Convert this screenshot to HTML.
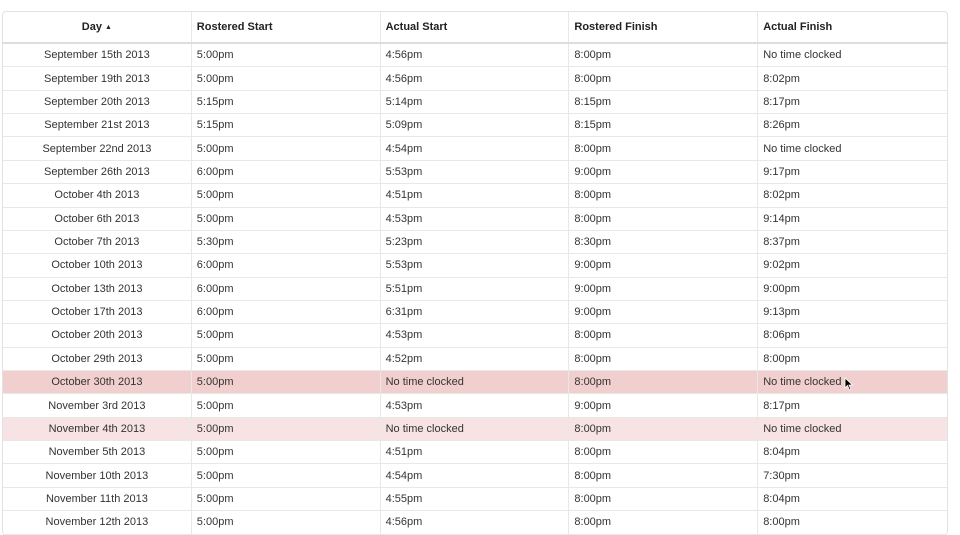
<!DOCTYPE html>
<html><head><style>
body{margin:0;background:#fff;width:960px;height:520px;overflow:hidden;font-family:"Liberation Sans",sans-serif;font-size:11px;color:#333}
.t{position:absolute;left:2px;top:11px;width:944px;border:1px solid #e2e2e2;border-radius:4px;border-bottom:none}
.r{display:flex;height:23.37px;border-bottom:1px solid #e8e8e8;box-sizing:border-box;align-items:center}
.h{height:32px;font-weight:bold;border-bottom:2px solid #ddd;font-size:11px;color:#222}
.c{width:189px;box-sizing:border-box;padding-left:5px;border-right:1px solid #e8e8e8;height:100%;display:flex;align-items:center}
.c:first-child{justify-content:center;padding:0}
.c:last-child{border-right:none}
.a{background:#f2cfcf}.b{background:#f7e3e3}
</style></head><body>
<div class="t">
<div class="r h"><div class="c">Day&nbsp;<span style="font-size:7px">▲</span></div><div class="c">Rostered Start</div><div class="c">Actual Start</div><div class="c">Rostered Finish</div><div class="c">Actual Finish</div></div>
<div class="r"><div class="c">September 15th 2013</div><div class="c">5:00pm</div><div class="c">4:56pm</div><div class="c">8:00pm</div><div class="c">No time clocked</div></div>
<div class="r"><div class="c">September 19th 2013</div><div class="c">5:00pm</div><div class="c">4:56pm</div><div class="c">8:00pm</div><div class="c">8:02pm</div></div>
<div class="r"><div class="c">September 20th 2013</div><div class="c">5:15pm</div><div class="c">5:14pm</div><div class="c">8:15pm</div><div class="c">8:17pm</div></div>
<div class="r"><div class="c">September 21st 2013</div><div class="c">5:15pm</div><div class="c">5:09pm</div><div class="c">8:15pm</div><div class="c">8:26pm</div></div>
<div class="r"><div class="c">September 22nd 2013</div><div class="c">5:00pm</div><div class="c">4:54pm</div><div class="c">8:00pm</div><div class="c">No time clocked</div></div>
<div class="r"><div class="c">September 26th 2013</div><div class="c">6:00pm</div><div class="c">5:53pm</div><div class="c">9:00pm</div><div class="c">9:17pm</div></div>
<div class="r"><div class="c">October 4th 2013</div><div class="c">5:00pm</div><div class="c">4:51pm</div><div class="c">8:00pm</div><div class="c">8:02pm</div></div>
<div class="r"><div class="c">October 6th 2013</div><div class="c">5:00pm</div><div class="c">4:53pm</div><div class="c">8:00pm</div><div class="c">9:14pm</div></div>
<div class="r"><div class="c">October 7th 2013</div><div class="c">5:30pm</div><div class="c">5:23pm</div><div class="c">8:30pm</div><div class="c">8:37pm</div></div>
<div class="r"><div class="c">October 10th 2013</div><div class="c">6:00pm</div><div class="c">5:53pm</div><div class="c">9:00pm</div><div class="c">9:02pm</div></div>
<div class="r"><div class="c">October 13th 2013</div><div class="c">6:00pm</div><div class="c">5:51pm</div><div class="c">9:00pm</div><div class="c">9:00pm</div></div>
<div class="r"><div class="c">October 17th 2013</div><div class="c">6:00pm</div><div class="c">6:31pm</div><div class="c">9:00pm</div><div class="c">9:13pm</div></div>
<div class="r"><div class="c">October 20th 2013</div><div class="c">5:00pm</div><div class="c">4:53pm</div><div class="c">8:00pm</div><div class="c">8:06pm</div></div>
<div class="r"><div class="c">October 29th 2013</div><div class="c">5:00pm</div><div class="c">4:52pm</div><div class="c">8:00pm</div><div class="c">8:00pm</div></div>
<div class="r a"><div class="c">October 30th 2013</div><div class="c">5:00pm</div><div class="c">No time clocked</div><div class="c">8:00pm</div><div class="c">No time clocked <svg width="10" height="14" viewBox="0 0 10 14" style="margin-left:3px;margin-top:4px"><path d="M1 1 L1 11 L3.5 8.5 L5.5 13 L7 12.3 L5 8 L8.5 8 Z" fill="#000" stroke="#fff" stroke-width="0.8"/></svg></div></div>
<div class="r"><div class="c">November 3rd 2013</div><div class="c">5:00pm</div><div class="c">4:53pm</div><div class="c">9:00pm</div><div class="c">8:17pm</div></div>
<div class="r b"><div class="c">November 4th 2013</div><div class="c">5:00pm</div><div class="c">No time clocked</div><div class="c">8:00pm</div><div class="c">No time clocked</div></div>
<div class="r"><div class="c">November 5th 2013</div><div class="c">5:00pm</div><div class="c">4:51pm</div><div class="c">8:00pm</div><div class="c">8:04pm</div></div>
<div class="r"><div class="c">November 10th 2013</div><div class="c">5:00pm</div><div class="c">4:54pm</div><div class="c">8:00pm</div><div class="c">7:30pm</div></div>
<div class="r"><div class="c">November 11th 2013</div><div class="c">5:00pm</div><div class="c">4:55pm</div><div class="c">8:00pm</div><div class="c">8:04pm</div></div>
<div class="r"><div class="c">November 12th 2013</div><div class="c">5:00pm</div><div class="c">4:56pm</div><div class="c">8:00pm</div><div class="c">8:00pm</div></div>
</div>
</body></html>
